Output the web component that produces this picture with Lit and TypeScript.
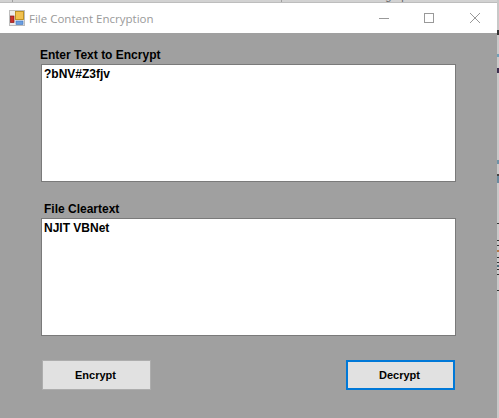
import { LitElement, html, css } from "lit";
import { customElement } from "lit/decorators.js";

@customElement("app-root")
export class AppRoot extends LitElement {
  static styles = css`
    :host { display: flex; width: 499px; height: 418px; overflow: hidden; background: #d4d4d4; font-family: "Liberation Sans", Arial, sans-serif; }
    .main { width: 497px; display: flex; flex-direction: column; }
    .ribbon { height: 3px; flex: none; display: flex; align-items: flex-end; background: #d2d2d2; overflow: hidden; box-sizing: border-box; border-bottom: 1px solid #bdbdbd; font-size: 11px; line-height: 11px; color: #666; }
    .ribbon span { flex: none; }
    .sep { width: 1px; height: 3px; background: #9f9f9f; }
    .s1 { margin-left: 12px; }
    .font { margin-left: 114px; width: 154px; }
    .para { margin-left: 80px; }
    .titlebar { height: 30px; flex: none; display: flex; align-items: center; background: #fff; color: #9a9a9a; font-family: "Open Sans", sans-serif; font-size: 11.5px; }
    .appicon { width: 16px; height: 16px; margin-left: 9px; margin-right: 4px; flex: none; }
    .title { flex: 1; white-space: nowrap; }
    .ctl { width: 46px; height: 30px; display: flex; align-items: center; justify-content: center; flex: none; box-sizing: border-box; }
    .ctl svg { width: 10px; height: 10px; }
    .ctl-min { width: 44px; }
    .ctl-close { width: 45px; padding-left: 1px; }
    .body { flex: 1; background: #a0a0a0; display: flex; flex-direction: column; padding-left: 41px; padding-right: 41px; box-sizing: border-box; }
    label { display: block; height: 14px; line-height: 14px; font-size: 12px; font-weight: 700; color: #000; white-space: nowrap; }
    .l1 { margin-top: 15px; margin-left: -1px; margin-bottom: 2px; }
    .l2 { margin-top: 20px; margin-left: 3px; margin-bottom: 2px; }
    .box { height: 118px; box-sizing: border-box; width: 415px; background: #fff; border: 1px solid #7a7a7a; padding: 2px 2px; font-size: 12px; font-weight: 700; line-height: 14px; color: #000; }
    .actions { display: flex; justify-content: space-between; margin-top: 24px; padding: 0 1px; width: 413px; }
    button { width: 109px; height: 30px; box-sizing: border-box; background: #e1e1e1; border: 1px solid #adadad; font: 700 11px "Liberation Sans", Arial, sans-serif; color: #000; padding: 0 2px 0 0; }
    button.focus { border: 2px solid #0078d7; }
    .edge { width: 2px; flex: none; background: linear-gradient(to bottom,
      #c8c8c8 0 30px, #333 30px 35px, #c9c9c9 35px 54px, #6f9fb8 54px 57px, #c9c9c9 57px 68px,
      #3d2f50 68px 73px, #c9c9c9 73px 160px, #6f93a8 160px 164px, #c9c9c9 164px 174px,
      #444 174px 176px, #6a8ba0 176px 183px, #c9c9c9 183px 223px, #333 223px 224px,
      #c9c9c9 224px 240px, #333 240px 241px, #c9c9c9 241px 245px, #333 245px 246px,
      #c9c9c9 246px 250px, #b57a4a 250px 252px, #c9c9c9 252px 257px, #333 257px 258px,
      #c9c9c9 258px 262px, #333 262px 263px, #c9c9c9 263px 265px, #4a6a7a 265px 267px,
      #c9c9c9 267px 269px, #333 269px 270px, #c9c9c9 270px 274px, #333 274px 275px,
      #c9c9c9 275px 290px, #333 290px 291px, #c9c9c9 291px); }
  `;

  render() {
    return html`
      <div class="main">
        <div class="ribbon">
          <span class="sep s1"></span>
          <span class="font">Font</span>
          <span class="sep"></span>
          <span class="para">Paragraph</span>
        </div>
        <div class="titlebar">
          <svg class="appicon" viewBox="0 0 16 16" aria-hidden="true">
            <rect x="0.5" y="0.5" width="15" height="15" fill="#ececec" stroke="#bdbdbd"/>
            <rect x="1.5" y="6" width="3.5" height="6.5" fill="#c9302c" stroke="#8c1512" stroke-width="0.7"/>
            <rect x="6.5" y="1.5" width="8" height="8" fill="#f2c14e" stroke="#b98a16" stroke-width="0.9"/>
            <rect x="7" y="11" width="7" height="3.5" fill="#6a9fe0" stroke="#3f74bf" stroke-width="0.6"/>
          </svg>
          <span class="title">File Content Encryption</span>
          <div class="ctl ctl-min"><svg viewBox="0 0 10 10" aria-hidden="true"><path d="M0 5.5h10" stroke="#999" stroke-width="1" fill="none"/></svg></div>
          <div class="ctl"><svg viewBox="0 0 10 10" aria-hidden="true"><rect x="0.5" y="0.5" width="9" height="9" stroke="#999" stroke-width="1" fill="none"/></svg></div>
          <div class="ctl ctl-close"><svg viewBox="0 0 10 10" aria-hidden="true"><path d="M0 0l10 10M10 0L0 10" stroke="#999" stroke-width="1" fill="none"/></svg></div>
        </div>
        <div class="body">
          <label class="l1">Enter Text to Encrypt</label>
          <div class="box">?bNV#Z3fjv</div>
          <label class="l2">File Cleartext</label>
          <div class="box">NJIT VBNet</div>
          <div class="actions">
            <button>Encrypt</button>
            <button class="focus">Decrypt</button>
          </div>
        </div>
      </div>
      <div class="edge"></div>
    `;
  }
}
